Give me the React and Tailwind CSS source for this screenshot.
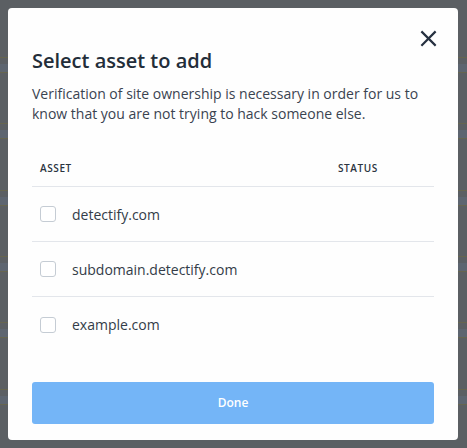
import React from "react";

const rows = ["detectify.com", "subdomain.detectify.com", "example.com"];

function Backdrop() {
  // faint page rows visible through overlay
  const bands = [57, 123, 190, 256, 322, 389];
  return (
    <div className="absolute inset-0 bg-[#5b5f63]">
      {bands.map((y) => (
        <div key={y} className="absolute left-0 right-0" style={{ top: y }}>
          <div className="h-px bg-[#66654f]" />
          <div className="h-[6px]" />
          <div className="h-[8px] bg-[#5d6570]" />
          <div className="h-px bg-[#66654f]" />
        </div>
      ))}
    </div>
  );
}

export default function App() {
  return (
    <div
      className="relative w-[467px] h-[448px] overflow-hidden"
      style={{ fontFamily: '"Open Sans", "Noto Sans", sans-serif' }}
    >
      <Backdrop />
      <div className="absolute left-[8px] top-[8px] w-[450px] h-[432px] rounded-[4px] bg-[#fefefe] px-6 pt-[18px] pb-4 flex flex-col">
        <div className="flex items-start justify-between">
          <h1 className="mt-[21px] text-[20px] leading-[28px] font-semibold text-[#232d39]">
            Select asset to add
          </h1>
          <button className="w-6 h-6 -mr-[6px] flex items-center justify-center text-[#263040]">
            <svg width="17" height="17" viewBox="0 0 16 16" fill="none" stroke="currentColor" strokeWidth="2" strokeLinecap="square">
              <path d="M2 2L14 14M14 2L2 14" />
            </svg>
          </button>
        </div>
        <p className="mt-[9px] text-[14px] leading-[20px] text-[#3a4350]">
          Verification of site ownership is necessary in order for us to know that you are not trying to hack someone else.
        </p>
        <div className="mt-[36px]">
          <div className="flex border-b border-[#e3e6eb] pb-[10px] text-[10px] leading-[16px] font-semibold tracking-[0.06em] text-[#2b3440]">
            <div className="pl-2 flex-1">ASSET</div>
            <div className="w-[96px]">STATUS</div>
          </div>
          {rows.map((r, i) => (
            <div
              key={r}
              className={`flex items-center h-[55px] ${i < rows.length - 1 ? "border-b border-[#e3e6eb]" : ""}`}
            >
              <div className="ml-2 w-4 h-4 rounded-[3px] border border-[#c5ccd4] bg-white" />
              <span className="ml-4 text-[14px] text-[#333c48]">{r}</span>
            </div>
          ))}
        </div>
        <div className="flex-1" />
        <button className="h-[42px] w-full rounded-[3px] bg-[#74b5f7] text-white text-[12px] font-semibold">
          Done
        </button>
      </div>
    </div>
  );
}
